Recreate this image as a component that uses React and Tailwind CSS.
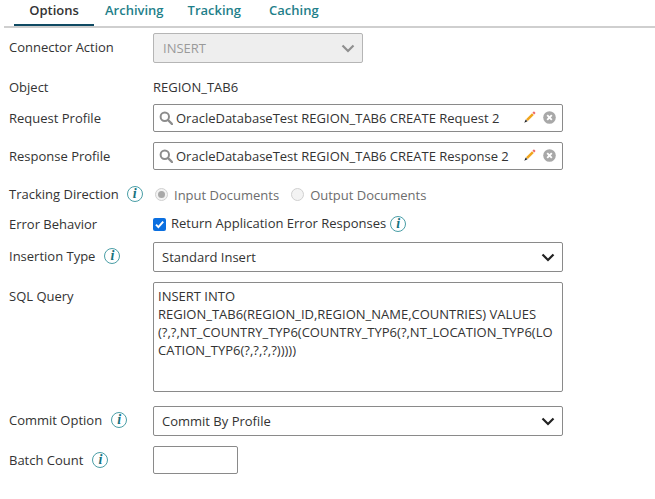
const font = { fontFamily: '"Open Sans", sans-serif' };

function Info({ className = "" }) {
  return (
    <span className={"flex h-[16px] w-[16px] shrink-0 items-center justify-center rounded-full border-[1.5px] border-[#4a9ea6] font-['Liberation_Serif',serif] text-[14px] font-bold italic leading-none text-[#17727e] " + className}>
      i
    </span>
  );
}

function Label({ children, info, infoGap = "ml-[9px]", className = "items-center" }) {
  return (
    <div className={"flex w-[153px] shrink-0 pl-[9px] text-[#333] " + className}>
      <span>{children}</span>
      {info && <Info className={infoGap} />}
    </div>
  );
}

function Chevron({ color = "#222" }) {
  return (
    <svg width="14" height="9" viewBox="0 0 14 9" fill="none" stroke={color} strokeWidth="2.2">
      <path d="M1.5 1.5 7 7l5.5-5.5" />
    </svg>
  );
}

function Select({ value }) {
  return (
    <div className="flex h-[30px] w-[410px] items-center justify-between rounded-[2px] border border-[#8a8a8a] pl-[8px] pr-[7px] text-[#333]">
      <span>{value}</span>
      <Chevron />
    </div>
  );
}

function Profile({ value }) {
  return (
    <div className="flex h-[28px] w-[410px] items-center rounded-[2px] border border-[#8a8a8a] pl-[5px] text-[#333]">
      <svg width="14" height="14" viewBox="0 0 14 14" fill="none" stroke="#8c8c8c" strokeWidth="2" className="shrink-0">
        <circle cx="5.8" cy="5.8" r="4.2" />
        <path d="m9 9 4 4" strokeWidth="2.4" strokeLinecap="round" />
      </svg>
      <span className="ml-[3px] flex-1 whitespace-nowrap">{value}</span>
      <svg width="12" height="12" viewBox="0 0 12 12" className="mb-[2px] shrink-0">
        <path d="M8 2.2 9.8 4 3.8 10 2 8.2z" fill="#f0a51e" />
        <path d="M8.4 1.8 9.4.8c.3-.3.7-.3 1 0l.8.8c.3.3.3.7 0 1l-1 1z" fill="#ef6a6a" />
        <path d="M1.7 8.5 3.5 10.3.3 11.7z" fill="#222" />
      </svg>
      <svg width="13" height="13" viewBox="0 0 13 13" className="mb-[2px] ml-[7px] mr-[6px] shrink-0">
        <circle cx="6.5" cy="6.5" r="6.3" fill="#a8a8a8" />
        <path d="m4.2 4.2 4.6 4.6m0-4.6L4.2 8.8" stroke="#fff" strokeWidth="1.9" />
      </svg>
    </div>
  );
}

function Radio({ checked, label, className = "" }) {
  return (
    <span className={"flex items-center text-[#6d6d6d] " + className}>
      <span className="flex h-[13px] w-[13px] items-center justify-center rounded-full border border-[#d0d0d0] bg-[#f3f3f3]">
        {checked && <span className="h-[7px] w-[7px] rounded-full bg-[#a9a9a9]" />}
      </span>
      <span className="ml-[6px]">{label}</span>
    </span>
  );
}

export default function App() {
  return (
    <div style={font} className="h-[499px] w-[655px] overflow-hidden bg-white text-[13px] leading-[18px]">
      <div className="ml-[4px] flex h-[28px] border-b-2 border-[#cfcfcf] font-semibold text-[#1f7f8a]">
        <span className="ml-[10px] flex h-[26px] w-[80px] items-start justify-center border-b-2 border-[#0f4a63] pt-[1px] text-[#333]">Options</span>
        <span className="ml-[11px] pt-[1px]">Archiving</span>
        <span className="ml-[24px] pt-[1px]">Tracking</span>
        <span className="ml-[28px] pt-[1px]">Caching</span>
      </div>

      <div className="mt-[5px] flex h-[30px]">
        <Label className="items-start pt-[5px]">Connector Action</Label>
        <div className="flex h-[30px] w-[210px] items-center justify-between rounded-[2px] border border-[#b5b5b5] bg-[#eeeeee] pl-[9px] pr-[7px] text-[#9a9a9a]">
          <span>INSERT</span>
          <Chevron color="#8f8f8f" />
        </div>
      </div>

      <div className="mt-[14px] flex h-[20px] items-center">
        <Label>Object</Label>
        <span className="text-[#333]">REGION_TAB6</span>
      </div>

      <div className="mt-[7px] flex h-[28px] items-center">
        <Label>Request Profile</Label>
        <Profile value="OracleDatabaseTest REGION_TAB6 CREATE Request 2" />
      </div>

      <div className="mt-[10px] flex h-[28px] items-center">
        <Label>Response Profile</Label>
        <Profile value="OracleDatabaseTest REGION_TAB6 CREATE Response 2" />
      </div>

      <div className="mt-[14px] flex h-[20px] items-center">
        <Label info infoGap="ml-[8px]">Tracking Direction</Label>
        <div className="flex items-center pl-[2px] pt-[1px]">
          <Radio checked label="Input Documents" />
          <Radio label="Output Documents" className="ml-[12px]" />
        </div>
      </div>

      <div className="mt-[10px] flex h-[20px] items-center">
        <Label>Error Behavior</Label>
        <span className="flex h-[13px] w-[13px] items-center justify-center rounded-[2px] bg-[#0b6fe0]">
          <svg width="11" height="11" viewBox="0 0 11 11" fill="none" stroke="#fff" strokeWidth="2">
            <path d="m2 5.6 2.4 2.5L9.2 2.6" />
          </svg>
        </span>
        <span className="mb-[2px] ml-[5px] text-[#333]">Return Application Error Responses</span>
        <Info className="ml-[4px]" />
      </div>

      <div className="mt-[8px] flex h-[30px] items-center">
        <Label info className="items-center pb-[2px]">Insertion Type</Label>
        <Select value="Standard Insert" />
      </div>

      <div className="mt-[10px] flex h-[110px]">
        <Label className="items-start pt-[5px]">SQL Query</Label>
        <div className="h-[110px] w-[410px] rounded-[2px] border border-[#8a8a8a] px-[4px] pt-[4px] text-[#333] [overflow-wrap:anywhere]">
          INSERT INTO
          <br />
          REGION_TAB6(REGION_ID,REGION_NAME,COUNTRIES) VALUES
          <br />
          (?,?,NT_COUNTRY_TYP6(COUNTRY_TYP6(?,NT_LOCATION_TYP6(LO
          <br />
          CATION_TYP6(?,?,?,?)))))
        </div>
      </div>

      <div className="mt-[14px] flex h-[30px] items-center">
        <Label info className="items-center pb-[2px]">Commit Option</Label>
        <Select value="Commit By Profile" />
      </div>

      <div className="mt-[10px] flex h-[28px] items-center">
        <Label info>Batch Count</Label>
        <div className="h-[28px] w-[85px] rounded-[2px] border border-[#8a8a8a]" />
      </div>
    </div>
  );
}
